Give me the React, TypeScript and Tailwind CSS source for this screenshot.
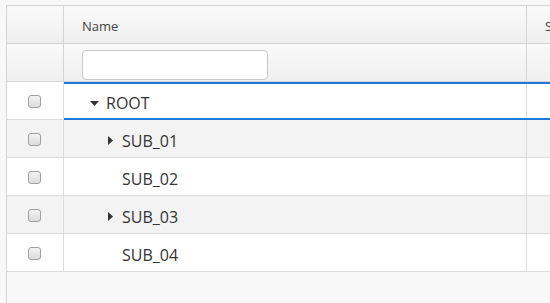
const rows = [
  { name: "ROOT", level: 0, caret: "down", selected: true },
  { name: "SUB_01", level: 1, caret: "right" },
  { name: "SUB_02", level: 1 },
  { name: "SUB_03", level: 1, caret: "right" },
  { name: "SUB_04", level: 1 },
];

function Checkbox() {
  return (
    <span className="block h-[13px] w-[13px] rounded-[3px] border border-[#a0a0a0] bg-gradient-to-b from-[#f2f2f2] to-[#dcdcdc]" />
  );
}

function Caret({ dir }: { dir?: string }) {
  if (dir === "down") {
    return (
      <svg width="9" height="5" viewBox="0 0 9 5">
        <path d="M0 0h9L4.5 5z" fill="#333" />
      </svg>
    );
  }
  if (dir === "right") {
    return (
      <svg width="5" height="9" viewBox="0 0 5 9">
        <path d="M0 0v9l5-4.5z" fill="#333" />
      </svg>
    );
  }
  return null;
}

export default function App() {
  return (
    <div
      className="h-[303px] w-[550px] overflow-hidden bg-[#f8f8f8] pl-[6px] pt-[5px] text-[#333]"
      style={{ fontFamily: '"Open Sans", "Noto Sans", sans-serif' }}
    >
      <div className="flex h-full w-[800px] flex-col border-l border-t border-[#d4d4d4]">
        {/* header */}
        <div className="flex h-[38px] shrink-0 border-b border-[#d4d4d4] bg-gradient-to-b from-[#fafafa] to-[#efefef]">
          <div className="w-[57px] shrink-0 border-r border-[#d4d4d4]" />
          <div className="flex w-[463px] shrink-0 items-center border-r border-[#d4d4d4] pl-[18px] pt-[4px] text-[13px] text-[#444]">
            Name
          </div>
          <div className="flex flex-1 items-center pl-[18px] pt-[4px] text-[13px] text-[#444]">Size</div>
        </div>
        {/* filter row */}
        <div className="flex h-[38px] shrink-0 border-b border-[#d4d4d4] bg-gradient-to-b from-[#fafafa] to-[#efefef]">
          <div className="w-[57px] shrink-0 border-r border-[#d4d4d4]" />
          <div className="flex w-[463px] shrink-0 items-center border-r border-[#d4d4d4] pl-[18px] pt-[4px]">
            <input
              type="text"
              className="h-[30px] w-[186px] rounded-[4px] border border-[#c8c8c8] bg-white outline-none"
            />
          </div>
          <div className="flex-1" />
        </div>
        {/* body */}
        {rows.map((r, i) => (
          <div
            key={r.name}
            className={`flex h-[38px] shrink-0 ${i % 2 === 1 ? "bg-[#f3f3f3]" : "bg-white"}`}
          >
            <div className="flex w-[57px] shrink-0 items-center justify-center border-b border-r border-[#dcdcdc] pr-[1px] pt-[2px]">
              <Checkbox />
            </div>
            <div
              className={`flex flex-1 ${r.selected ? "border-y-2 border-[#1e7ad8]" : "border-b border-[#dcdcdc]"}`}
            >
              <div
                className="flex w-[463px] shrink-0 items-center border-r border-[#dcdcdc] pt-[4px] text-[16px] text-[#333]"
                style={{ paddingLeft: 22 + r.level * 16 }}
              >
                <span className="flex w-[16px] justify-center">
                  <Caret dir={r.caret} />
                </span>
                <span className="ml-[4px]">{r.name}</span>
              </div>
              <div className="flex-1" />
            </div>
          </div>
        ))}
        <div className="flex-1" />
      </div>
    </div>
  );
}
